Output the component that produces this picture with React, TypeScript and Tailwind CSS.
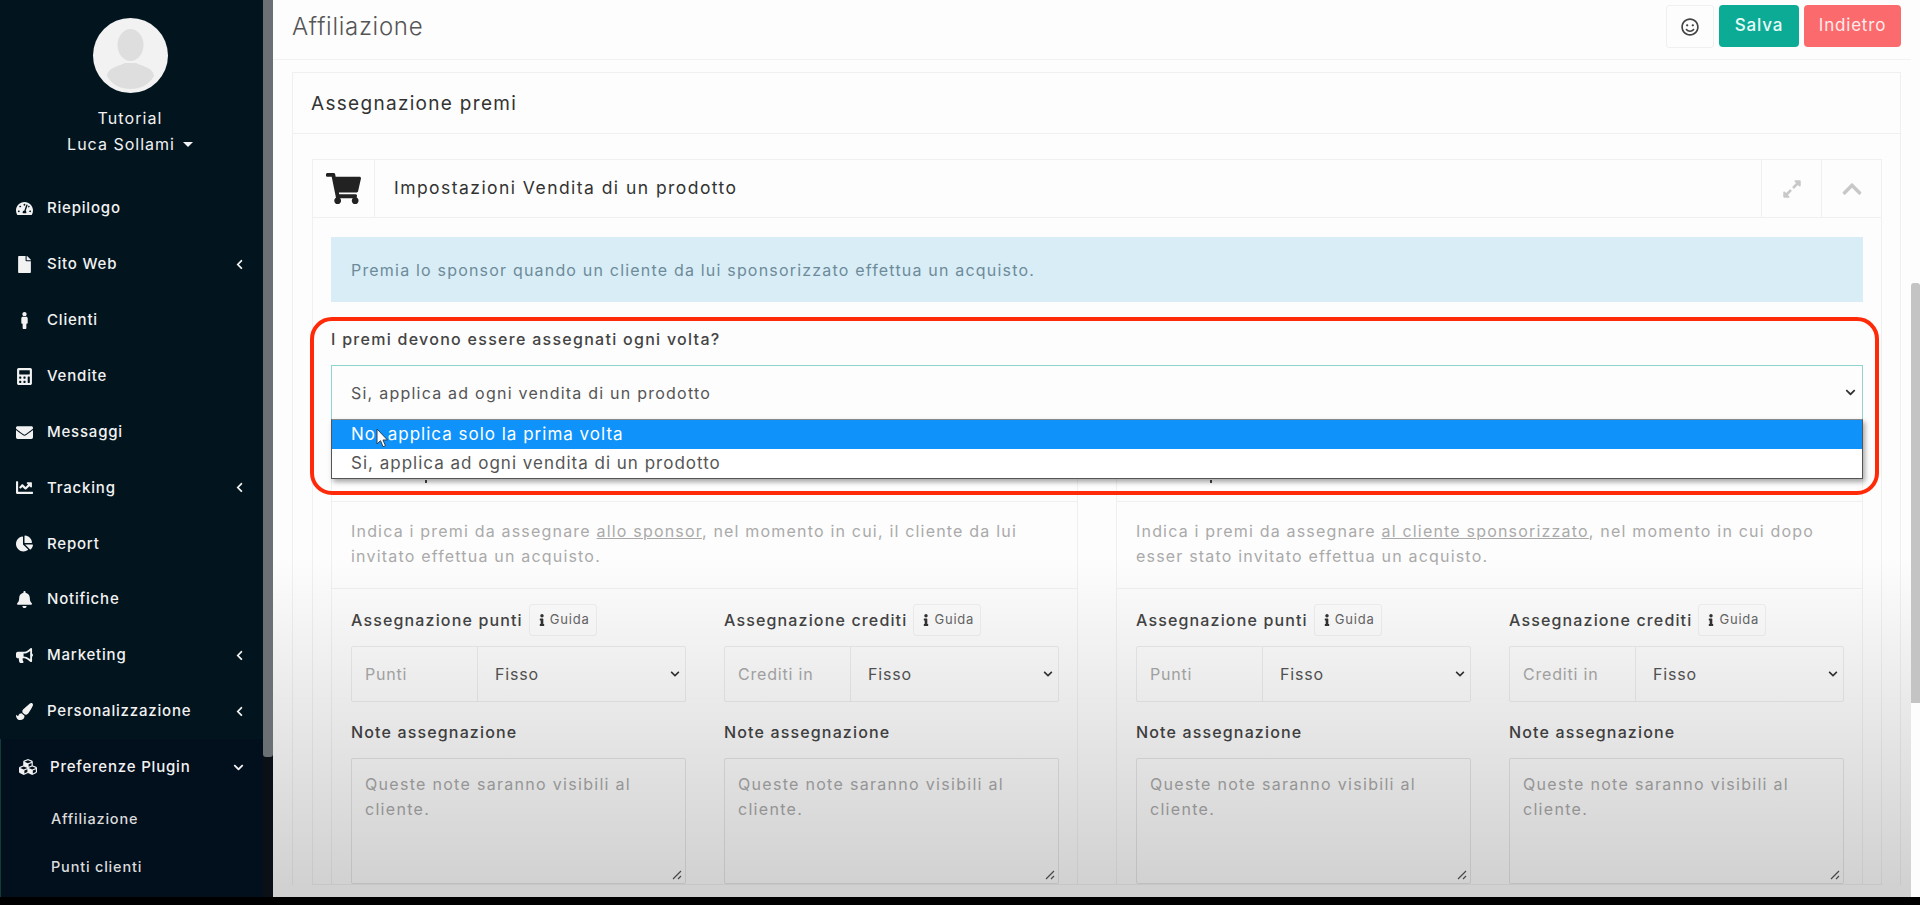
import React from "react";
import {
  FaTachometerAlt, FaFile, FaMale, FaCalculator, FaEnvelope, FaChartLine, FaChartPie, FaBell, FaBullhorn,
  FaPaintBrush, FaCubes, FaChevronLeft, FaChevronDown, FaChevronUp, FaShoppingCart, FaExpandAlt, FaRegSmile, FaInfo,
} from "react-icons/fa";

const nav = [
  { label: "Riepilogo", Icon: FaTachometerAlt },
  { label: "Sito Web", Icon: FaFile, sub: true },
  { label: "Clienti", Icon: FaMale },
  { label: "Vendite", Icon: FaCalculator },
  { label: "Messaggi", Icon: FaEnvelope },
  { label: "Tracking", Icon: FaChartLine, sub: true },
  { label: "Report", Icon: FaChartPie },
  { label: "Notifiche", Icon: FaBell },
  { label: "Marketing", Icon: FaBullhorn, sub: true },
  { label: "Personalizzazione", Icon: FaPaintBrush, sub: true },
];

function Sidebar() {
  return (
    <aside className="flex w-[273px] shrink-0">
      <div className="w-[263px] bg-[#02151f] text-[#f2f2f2] flex flex-col overflow-hidden">
        <div className="flex flex-col items-center pt-[18px] pr-[3px]">
          <div className="w-[75px] h-[75px] rounded-full bg-[#f2f2f2] overflow-hidden">
            <svg viewBox="0 0 75 75" className="w-full h-full">
              <ellipse cx="37.5" cy="27" rx="13" ry="16" fill="#dedede" />
              <path d="M14 58c1-9 13-10 18-13h11c5 3 17 4 18 13-5 9-14 13-23.500 13S19 67 14 58z" fill="#dedede" />
            </svg>
          </div>
          <div className="mt-[13px] text-[16px] leading-[25px] tracking-[1.1px]">Tutorial</div>
          <div className="flex items-center gap-[8px] text-[16px] leading-[26px] tracking-[1px]">
            Luca Sollami
            <span className="w-0 h-0 border-x-[5px] border-x-transparent border-t-[5px] border-t-[#f2f2f2]" />
          </div>
        </div>
        <nav className="mt-[23.500px] font-medium text-[15px]">
          {nav.map(({ label, Icon, sub }) => (
            <div key={label} className="h-[55.900px] flex items-center pl-[16px] pr-[18px]">
              <span className="w-[31px] shrink-0"><Icon size={17} /></span>
              <span className="flex-1 tracking-[0.8px]">{label}</span>
              {sub && <FaChevronLeft size={11} />}
            </div>
          ))}
          <div className="border-l border-[#123b3a] bg-[#020f1c] pb-[20px]">
            <div className="h-[55.900px] flex items-center pl-[18px] pr-[19px]">
              <span className="w-[31px] shrink-0"><FaCubes size={18} /></span>
              <span className="flex-1 tracking-[0.8px]">Preferenze Plugin</span>
              <FaChevronDown size={11} />
            </div>
            <div className="h-[48px] flex items-center pl-[50px] text-[#dcdcdc] text-[14.500px] tracking-[0.8px]">Affiliazione</div>
            <div className="h-[48px] flex items-center pl-[50px] text-[#dcdcdc] text-[14.500px] tracking-[0.8px]">Punti clienti</div>
          </div>
        </nav>
      </div>
      <div className="w-[10px] bg-[#0a1016]">
        <div className="h-[757px] bg-[#6a7074] rounded-b-[3px]" />
      </div>
    </aside>
  );
}

function Guida() {
  return (
    <span className="inline-flex items-center gap-[2px] h-[32px] px-[6px] border border-[#f0f0f0] rounded-[3px] text-[13px] tracking-[0.8px] text-[#666] font-normal">
      <FaInfo size={12} className="text-[#333]" />
      Guida
    </span>
  );
}

function Field({ label, unit }: { label: string; unit: string }) {
  return (
    <div className="min-w-0">
      <div className="h-[32px] flex items-center gap-[6px] text-[#444] font-medium text-[16px] tracking-[1.150px] whitespace-nowrap">
        {label}
        <Guida />
      </div>
      <div className="mt-[10px] h-[56px] flex border border-[#ececec] rounded-[2px] text-[16px] tracking-[0.8px]">
        <div className="w-[126px] shrink-0 flex items-center pl-[13px] text-[#aaa] border-r border-[#ececec]">{unit}</div>
        <div className="flex-1 flex items-center justify-between pl-[17px] pr-[5px] text-[#555]">
          Fisso
          <FaChevronDown size={10} className="text-[#333]" />
        </div>
      </div>
      <div className="mt-[19px] h-[22px] flex items-center text-[#444] font-medium text-[16px] tracking-[1.150px]">Note assegnazione</div>
      <div className="relative mt-[15px] h-[126px] border border-[#e6e6e6] rounded-[2px] pl-[13px] pt-[13px] pr-[13px] text-[16px] tracking-[1.300px] leading-[25px] text-[#aaa]">
        Queste note saranno visibili al cliente.
        <svg viewBox="0 0 10 10" className="absolute right-[3px] bottom-[3px] w-[10px] h-[10px] text-[#555]">
          <path d="M1 9 9 1M6 9l3-3" stroke="currentColor" strokeWidth="1.200" fill="none" />
        </svg>
      </div>
    </div>
  );
}

function Panel({ intro, fill }: { intro: React.ReactNode; fill: [string, string] }) {
  return (
    <div className="border-x border-[#f0f0f0]">
      <div className="h-[56px] border-b border-[#f0f0f0] pl-[93px] pt-[34px]">
        <div className="w-[2px] h-[3px] bg-[#444]" />
      </div>
      <div className="h-[87px] border-b border-[#f0f0f0] pl-[19px] pr-[16px] pt-[17px] text-[#aaa] text-[16px] tracking-[1.190px] leading-[25px]">{intro}</div>
      <div className="grid grid-cols-2 gap-[38px] pl-[19px] pr-[18px] pt-[15px]">
        <Field label="Assegnazione punti" unit={fill[0]} />
        <Field label="Assegnazione crediti" unit={fill[1]} />
      </div>
    </div>
  );
}

function Cursor() {
  return (
    <svg viewBox="0 0 12 20" className="absolute left-[44px] top-[8px] w-[12px] h-[20px]">
      <path d="M1 1v15l3.500-3.300 2.500 6 2.500-1-2.500-5.700h4.500z" fill="#fff" stroke="#25405c" strokeWidth="1" />
    </svg>
  );
}

function Content() {
  return (
    <div className="flex-1 min-w-0 flex flex-col relative overflow-hidden">
      <header className="h-[60px] shrink-0 flex items-start justify-between pl-[19px] pr-[10px] pt-[5px] border-b border-[#f2f2f2]">
        <h1 className="text-[24px] leading-[44px] font-light text-[#555] tracking-[0.7px]">Affiliazione</h1>
        <div className="flex gap-[5px]">
          <div className="w-[48px] h-[43px] flex items-center justify-center border border-[#f0f0f0] rounded-[3px] text-[#444]"><FaRegSmile size={18} /></div>
          <div className="w-[80px] h-[42px] flex items-center justify-center rounded-[4px] bg-[#0cab96] text-[#e8fbf7] text-[17px] tracking-[0.8px] font-medium">Salva</div>
          <div className="w-[97px] h-[42px] flex items-center justify-center rounded-[4px] bg-[#fb6b6e] text-[#ffecec] text-[17px] tracking-[0.8px]">Indietro</div>
        </div>
      </header>
      <div className="mt-[12px] ml-[19px] mr-[10px] border-x border-t border-[#f0f0f0]">
        <div className="h-[61px] flex items-center pl-[18px] pt-[2px] border-b border-[#f0f0f0] text-[#333] text-[19px] tracking-[1.300px]">Assegnazione premi</div>
        <div className="mt-[25px] ml-[19px] mr-[18px] border border-[#f0f0f0]">
          <div className="h-[58px] flex border-b border-[#f0f0f0]">
            <div className="w-[62px] flex items-center justify-center border-r border-[#f0f0f0] text-[#222]"><FaShoppingCart size={35} /></div>
            <div className="flex-1 flex items-center pl-[19px] text-[17.500px] tracking-[1.450px] text-[#333]">Impostazioni Vendita di un prodotto</div>
            <div className="w-[60px] flex items-center justify-center border-l border-[#f0f0f0] text-[#c8c8c8]"><FaExpandAlt size={20} /></div>
            <div className="w-[60px] flex items-center justify-center border-l border-[#f0f0f0] text-[#c8c8c8]"><FaChevronUp size={22} /></div>
          </div>
          <div className="px-[18px] pt-[19px]">
            <div className="h-[65px] flex items-center pl-[20px] bg-[#d9edf7] text-[#6d8b99] text-[16px] tracking-[1.190px]">Premia lo sponsor quando un cliente da lui sponsorizzato effettua un acquisto.</div>
            <div className="relative mt-[26px]">
              <div className="h-[22px] flex items-center text-[#444] text-[16px] tracking-[1.280px] font-medium">I premi devono essere assegnati ogni volta?</div>
              <div className="mt-[15px] h-[55px] flex items-center justify-between pl-[19px] pr-[6px] border border-[#8fd5cf] text-[#555] text-[16px] tracking-[1.230px]">
                Si, applica ad ogni vendita di un prodotto
                <FaChevronDown size={11} className="text-[#333]" />
              </div>
              <div className="absolute z-10 left-0 right-0 top-[91px] h-[60px] border border-[#555] border-t-[#888] bg-white shadow-[2px_3px_5px_rgba(0,0,0,0.35)] text-[17px] tracking-[1px]">
                <div className="relative h-[29px] flex items-center pl-[19px] bg-[#0f93fb] text-white">
                  No, applica solo la prima volta
                  <Cursor />
                </div>
                <div className="h-[29px] flex items-center pl-[19px] text-[#555]">Si, applica ad ogni vendita di un prodotto</div>
              </div>
              <div className="absolute z-20 -left-[21px] -right-[16px] -top-[11px] h-[178px] border-[4px] border-[#ff2a0a] rounded-[22px] pointer-events-none" />
            </div>
            <div className="mt-[26px] grid grid-cols-2 gap-[38px]">
              <Panel
                fill={["Punti", "Crediti in"]}
                intro={<>Indica i premi da assegnare <u>allo sponsor</u>, nel momento in cui, il cliente da lui invitato effettua un acquisto.</>}
              />
              <Panel
                fill={["Punti", "Crediti in"]}
                intro={<>Indica i premi da assegnare <u>al cliente sponsorizzato</u>, nel momento in cui dopo esser stato invitato effettua un acquisto.</>}
              />
            </div>
          </div>
        </div>
      </div>
      <div className="absolute z-30 left-0 right-0 bottom-0 h-[340px] bg-gradient-to-b from-transparent to-[rgba(0,0,0,0.18)] pointer-events-none" />
    </div>
  );
}

export default function App() {
  return (
    <div className="w-[1920px] h-[905px] flex flex-col overflow-hidden bg-black [font-family:Inter,'Noto_Sans',sans-serif]">
      <div className="h-[897px] flex overflow-hidden">
        <Sidebar />
        <main className="flex-1 min-w-0 flex bg-[#fdfdfd] overflow-hidden">
          <Content />
          <div className="w-[9px] shrink-0 pt-[283px]">
            <div className="h-[420px] bg-[#c4c4c4] rounded-t-[3px]" />
          </div>
        </main>
      </div>
    </div>
  );
}
